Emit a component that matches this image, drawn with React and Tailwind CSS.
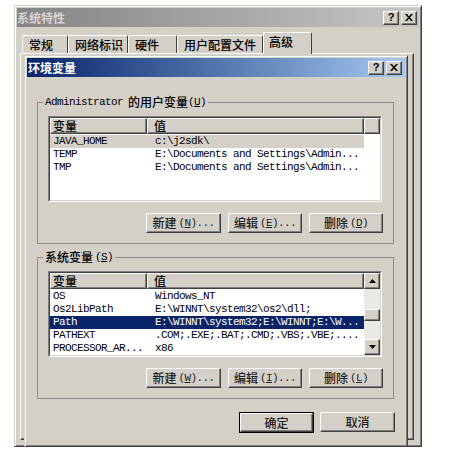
import React from "react";

const raised =
  "border border-t-white border-l-white border-r-[#404040] border-b-[#404040] shadow-[inset_-1px_-1px_0_#808080]";
const mono = "font-['Liberation_Mono',monospace] font-normal text-[11px] tracking-[-0.6px]";

const Mono = ({ children, className = "" }) => (
  <span className={`${mono} ${className}`}>{children}</span>
);

// title bar button (? or X)
const CapButton = ({ kind }) => (
  <div className={`w-[16px] h-[14px] bg-[#d4d0c8] ${raised} flex items-center justify-center`}>
    {kind === "help" ? (
      <span className="font-['Liberation_Sans',sans-serif] font-bold text-[11px] leading-none text-black">?</span>
    ) : (
      <svg width="8" height="7" viewBox="0 0 8 7">
        <path d="M0 0h2l2 2.5L6 0h2L5 3.5 8 7H6L4 4.5 2 7H0l3-3.5z" fill="#000" />
      </svg>
    )}
  </div>
);

const Btn = ({ children, isDefault, w = "w-[75px]" }) =>
  isDefault ? (
    <div className={`${w} h-[21px] border border-black`}>
      <div className={`h-full bg-[#d4d0c8] ${raised} flex items-center justify-center text-[12px] text-[#222]`}>
        {children}
      </div>
    </div>
  ) : (
    <div className={`${w} h-[20px] bg-[#d4d0c8] ${raised} flex items-center justify-center text-[12px] text-[#222]`}>
      {children}
    </div>
  );

const Label = ({ zh, key2, dots }) => (
  <span className="flex items-center">
    <span>{zh}</span>
    <Mono className="ml-[2px]">
      (<span className="underline">{key2}</span>){dots ? "..." : ""}
    </Mono>
  </span>
);

const Arrow = ({ up }) => (
  <svg width="7" height="4" viewBox="0 0 7 4">
    <path d={up ? "M3.5 0L7 4H0z" : "M0 0h7L3.5 4z"} fill="#000" />
  </svg>
);

const HeadCell = ({ children, className = "" }) => (
  <div className={`h-[16px] bg-[#d4d0c8] ${raised} flex items-center text-[12px] ${className}`}>
    {children}
  </div>
);

const ListBox = ({ rows, scroll }) => (
  <div className="h-[86px] border border-t-[#808080] border-l-[#808080] border-r-white border-b-white">
    <div className="h-full border border-t-[#404040] border-l-[#404040] border-r-[#d4d0c8] border-b-[#d4d0c8] bg-white flex overflow-hidden">
      <div className="flex-1 flex flex-col">
        <div className="flex">
          <HeadCell className="w-[97px] pl-[2px]">变量</HeadCell>
          <HeadCell className="w-[217px] pl-[6px]">值</HeadCell>
          {!scroll && <HeadCell className="w-[16px]" />}
        </div>
        <div className="pt-[1px] flex flex-col">
          {rows.map((r) => (
            <div
              key={r.name}
              className={`w-[314px] h-[13px] flex items-center leading-[13px] whitespace-nowrap ${
                r.sel === "focus" ? "bg-[#0a246a] text-white" : r.sel === "dim" ? "bg-[#d4d0c8] text-black" : "text-black"
              }`}
            >
              <Mono className="w-[97px] pl-[3px]">{r.name}</Mono>
              <Mono className="w-[217px] pl-[8px]">{r.value}</Mono>
            </div>
          ))}
        </div>
      </div>
      {scroll && (
        <div className="w-[16px] flex flex-col bg-[#ebe9e5]">
          <div className={`h-[16px] bg-[#d4d0c8] ${raised} flex items-center justify-center`}>
            <Arrow up />
          </div>
          <div className="flex-1 flex flex-col">
            <div className={`mt-[20px] h-[12px] bg-[#d4d0c8] ${raised}`} />
          </div>
          <div className={`h-[16px] bg-[#d4d0c8] ${raised} flex items-center justify-center`}>
            <Arrow />
          </div>
        </div>
      )}
    </div>
  </div>
);

const Group = ({ title, rows, scroll, keys, className = "" }) => (
  <fieldset className={`border border-[#8c8c8c] ${className}`}>
    <legend className="ml-[5px] px-[2px] leading-[14px] text-[12px] text-black">{title}</legend>
    <div className="pl-[10px] pr-[11px] pt-[7px] pb-[10px] flex flex-col">
      <ListBox rows={rows} scroll={scroll} />
      <div className="mt-[11px] flex justify-end gap-[7px] mr-[-1px]">
        <Btn>
          <Label zh="新建" key2={keys[0]} dots />
        </Btn>
        <Btn w="w-[74px]">
          <Label zh="编辑" key2={keys[1]} dots />
        </Btn>
        <Btn w="w-[74px]">
          <Label zh="删除" key2={keys[2]} />
        </Btn>
      </div>
    </div>
  </fieldset>
);

const userRows = [
  { name: "JAVA_HOME", value: "c:\\j2sdk\\", sel: "dim" },
  { name: "TEMP", value: "E:\\Documents and Settings\\Admin..." },
  { name: "TMP", value: "E:\\Documents and Settings\\Admin..." },
];

const sysRows = [
  { name: "OS", value: "Windows_NT" },
  { name: "Os2LibPath", value: "E:\\WINNT\\system32\\os2\\dll;" },
  { name: "Path", value: "E:\\WINNT\\system32;E:\\WINNT;E:\\W...", sel: "focus" },
  { name: "PATHEXT", value: ".COM;.EXE;.BAT;.CMD;.VBS;.VBE;...." },
  { name: "PROCESSOR_AR...", value: "x86" },
];

const tabs = [
  { label: "常规", w: "w-[46px]" },
  { label: "网络标识", w: "w-[60px]" },
  { label: "硬件", w: "w-[49px]" },
  { label: "用户配置文件", w: "w-[86px]" },
];

export default function App() {
  return (
    <div className="relative w-[474px] h-[469px] bg-white overflow-hidden font-['Noto_Sans_CJK_SC',sans-serif] font-medium text-[12px] text-black">
      {/* System Properties window (behind) */}
      <div className="absolute left-[14px] top-[5px] w-[408px] h-[442px] bg-[#d4d0c8] border border-t-[#d4d0c8] border-l-[#d4d0c8] border-r-[#404040] border-b-[#404040] shadow-[inset_1px_1px_0_#fff,inset_-1px_-1px_0_#808080] p-[2px] flex flex-col">
        <div className="h-[19px] bg-linear-to-r from-[#858585] to-[#c6c6c6] flex items-center justify-between pr-[2px]">
          <span className="font-bold text-[12px] text-[#d8d5d0] leading-none">系统特性</span>
          <div className="flex gap-[2px]">
            <CapButton kind="help" />
            <CapButton kind="close" />
          </div>
        </div>
        {/* tabs */}
        <div className="h-[26px] pl-[5px] flex items-end">
          {tabs.map((t) => (
            <div
              key={t.label}
              className={`${t.w} h-[18px] border-t border-l border-r border-t-white border-l-white border-r-[#404040] rounded-t-[2px] pl-[6px] flex items-center text-[12px] leading-none`}
            >
              {t.label}
            </div>
          ))}
          <div className="relative z-10 w-[49px] h-[22px] -mb-[1px] bg-[#d4d0c8] border-t border-l border-r border-t-white border-l-white border-r-[#404040] rounded-t-[2px] pl-[5px] pb-[3px] flex items-center text-[12px] leading-none">
            高级
          </div>
        </div>
        <div className="flex-1 ml-[3px] mr-[5px] mb-[4px] border border-t-white border-l-white border-r-[#404040] border-b-[#404040] shadow-[inset_-1px_-1px_0_#808080]" />
      </div>

      {/* Environment Variables dialog (front) */}
      <div className="absolute left-[24px] top-[55px] w-[384px] h-[392px] bg-[#d4d0c8] border border-t-[#d4d0c8] border-l-[#d4d0c8] border-r-[#404040] border-b-[#404040] shadow-[inset_1px_1px_0_#fff,inset_-1px_-1px_0_#808080] p-[2px] flex flex-col">
        <div className="h-[19px] bg-linear-to-r from-[#0a246a] to-[#a6caf0] flex items-center justify-between pl-[1px] pr-[3px]">
          <span className="font-bold text-[12px] text-white leading-none">环境变量</span>
          <div className="flex gap-[2px]">
            <CapButton kind="help" />
            <CapButton kind="close" />
          </div>
        </div>
        <div className="pt-[18px] pl-[10px] pr-[11px] flex flex-col">
          <Group
            title={
              <span className="flex items-center">
                <Mono>Administrator</Mono>
                <span className="ml-[5px]">的用户变量</span>
                <Mono>
                  (<span className="underline">U</span>)
                </Mono>
              </span>
            }
            rows={userRows}
            keys={["N", "E", "D"]}
          />
          <Group
            className="mt-[6px]"
            title={
              <span className="flex items-center">
                <span>系统变量</span>
                <Mono className="ml-[2px]">
                  (<span className="underline">S</span>)
                </Mono>
              </span>
            }
            rows={sysRows}
            scroll
            keys={["W", "I", "L"]}
          />
          <div className="mt-[13px] flex justify-end gap-[6px] mr-[-1px]">
            <Btn isDefault>确定</Btn>
            <Btn>取消</Btn>
          </div>
        </div>
      </div>
    </div>
  );
}
